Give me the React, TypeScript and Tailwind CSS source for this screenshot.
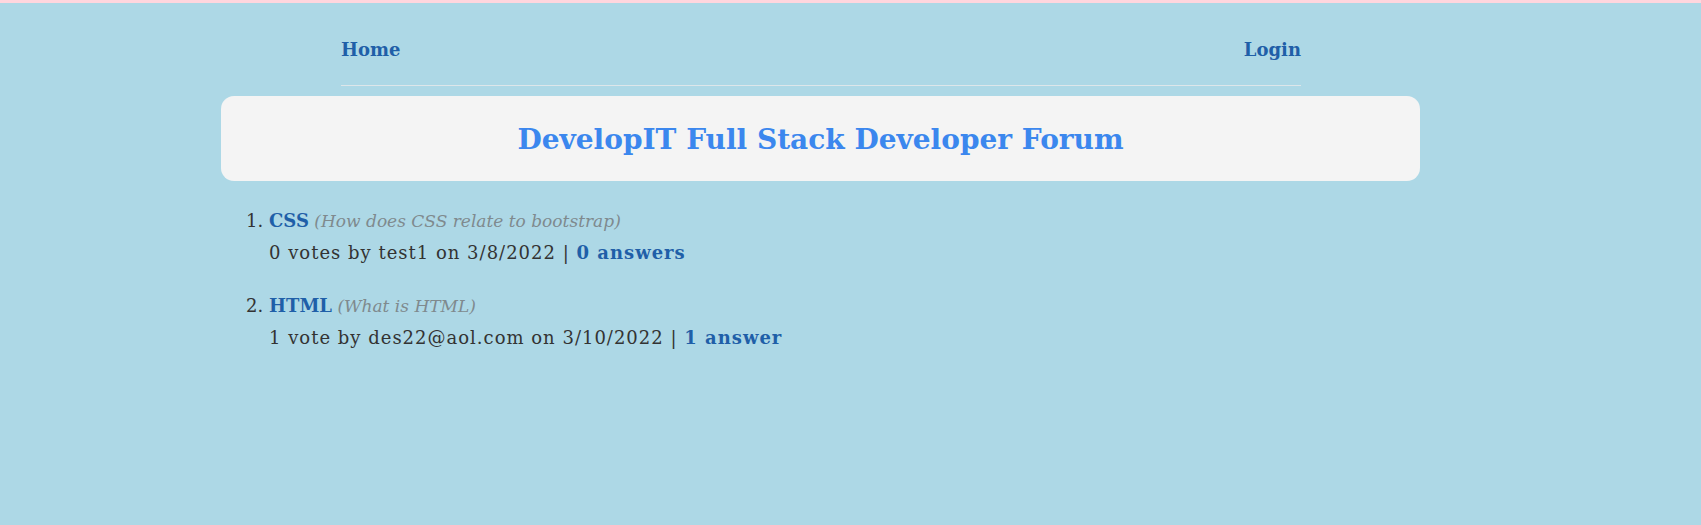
const questions = [
  {
    id: 1,
    title: 'CSS',
    body: 'How does CSS relate to bootstrap',
    meta: '0 votes by test1 on 3/8/2022',
    answers: '0 answers',
  },
  {
    id: 2,
    title: 'HTML',
    body: 'What is HTML',
    meta: '1 vote by des22@aol.com on 3/10/2022',
    answers: '1 answer',
  },
];

export default function App() {
  return (
    <div className="min-h-[525px] bg-[#add8e6] border-t-[3px] border-[#ffd6de] font-['DejaVu_Serif',serif] text-[#333]">
      <nav className="ml-[341px] w-[960px] pt-[33px] pb-[22px] flex justify-between border-b border-[#dde6ea]">
        <a href="#" className="text-[18px] font-bold text-[#1f5fa8]">Home</a>
        <a href="#" className="text-[18px] font-bold text-[#1f5fa8]">Login</a>
      </nav>
      <div className="ml-[221px] mt-[10px] w-[1199px] h-[85px] pt-[2px] rounded-[13px] bg-[#f4f4f4] flex items-center justify-center">
        <h1 className="text-[28px] font-bold text-[#3b87ee]">DevelopIT Full Stack Developer Forum</h1>
      </div>
      <ol className="ml-[269px] mt-[24px] list-decimal text-[17px] leading-[31px]">
        {questions.map((q) => (
          <li key={q.id} className="mb-[22px] marker:text-[18px]">
            <a href="#" className="text-[18px] font-bold text-[#1f5fa8]">{q.title}</a>{' '}
            <span className="italic text-[#7f8a8e]">({q.body})</span>
            <div className="text-[18px] tracking-[1px]">
              {q.meta} | <a href="#" className="font-bold text-[#1f5fa8]">{q.answers}</a>
            </div>
          </li>
        ))}
      </ol>
    </div>
  );
}
